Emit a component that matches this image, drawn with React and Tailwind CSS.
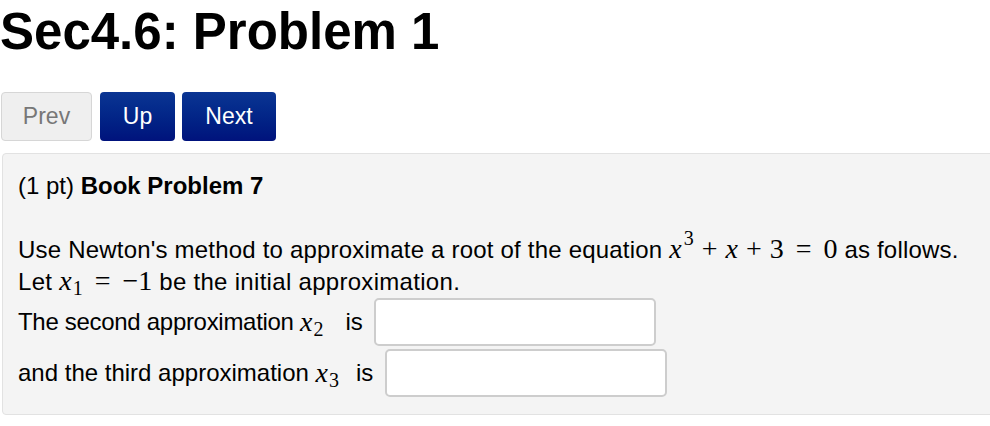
import React from 'react';

// small helpers for the MathJax-like inline math
const V = ({ children }) => <span className="italic">{children}</span>;
const Op = ({ children, wide }) => (
  <span className={wide ? 'px-[12px]' : 'px-[8px]'}>{children}</span>
);
const Math = ({ children }) => (
  <span className="font-['Liberation_Serif',serif] text-[28px] leading-none tracking-normal">{children}</span>
);
const Sub = ({ children }) => (
  <sub className="text-[20px] align-baseline relative top-[5px] ml-[1px]">{children}</sub>
);

function AnswerInput() {
  return (
    <input
      type="text"
      className="w-[282px] h-[48px] bg-white border-2 border-[#cdcdcd] rounded-[5px] outline-none"
    />
  );
}

export default function App() {
  return (
    <div className="w-[990px] h-[426px] overflow-hidden bg-white text-black font-['Liberation_Sans',Arial,sans-serif]">
      <h1 className="pt-[6px] text-[51px] leading-[52px] font-bold">Sec4.6: Problem 1</h1>

      {/* nav buttons */}
      <div className="flex items-center gap-[8px] mt-[34px] ml-[1px]">
        <button className="w-[91px] h-[49px] rounded-[4px] border border-[#d6d6d6] bg-[#efefef] text-[#777] text-[23px]">
          Prev
        </button>
        <button className="w-[75px] h-[49px] rounded-[4px] bg-gradient-to-b from-[#0b3593] to-[#00127c] text-white text-[23px]">
          Up
        </button>
        <button className="w-[94px] h-[49px] rounded-[4px] bg-gradient-to-b from-[#0b3593] to-[#00127c] text-white text-[23px] -ml-[1px]">
          Next
        </button>
      </div>

      {/* problem panel */}
      <div className="mt-[12px] ml-[2px] w-[1000px] bg-[#f4f4f4] border border-[#e2e2e2] rounded-[4px] pl-[15px] pt-[16px] pb-[17px] text-[24px] leading-[32px]">
        <p>
          (1 pt) <span className="font-bold">Book Problem 7</span>
        </p>

        <p className="mt-[32px] tracking-[0.2px]">
          Use Newton's method to approximate a root of the equation{' '}
          <Math>
            <V>x</V>
            <sup className="text-[20px] align-baseline relative -top-[13px] ml-[2px]">3</sup>
            <Op>+</Op>
            <V>x</V>
            <Op>+</Op>3<Op wide>=</Op>0
          </Math>{' '}
          as follows.
        </p>
        <p className="tracking-[0.3px]">
          Let{' '}
          <Math>
            <V>x</V>
            <Sub>1</Sub>
            <Op wide>=</Op>−1
          </Math>{' '}
          be the initial approximation.
        </p>

        <div className="flex items-center h-[48px]">
          <span className="tracking-[-0.3px]">The second approximation&nbsp;</span>
          <Math>
            <V>x</V>
            <Sub>2</Sub>
          </Math>
          <span className="ml-[22px] mr-[11px]">is</span>
          <AnswerInput />
        </div>
        <div className="flex items-center h-[48px] mt-[3px]">
          <span>and the third approximation&nbsp;</span>
          <Math>
            <V>x</V>
            <Sub>3</Sub>
          </Math>
          <span className="ml-[17px] mr-[12px]">is</span>
          <AnswerInput />
        </div>
      </div>
    </div>
  );
}
